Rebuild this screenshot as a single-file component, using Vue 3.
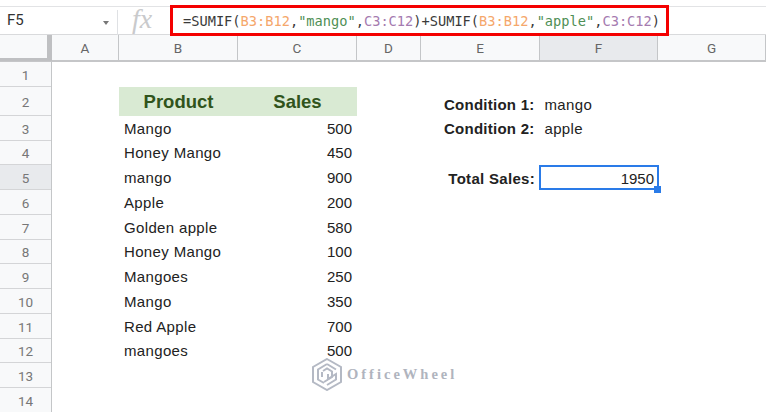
<script setup>
const columns = [
  { label: 'A', width: 67 },
  { label: 'B', width: 119 },
  { label: 'C', width: 119 },
  { label: 'D', width: 64 },
  { label: 'E', width: 119 },
  { label: 'F', width: 118, active: true },
  { label: 'G', width: 108 }
]
const rowHeights = [25, 29, 25, 24, 25, 25, 25, 24, 25, 25, 25, 24, 25, 25]
const rows = rowHeights.map((height, i) => ({ n: i + 1, height, active: i === 4 }))
const data = [
  ['Mango', 500], ['Honey Mango', 450], ['mango', 900], ['Apple', 200], ['Golden apple', 580],
  ['Honey Mango', 100], ['Mangoes', 250], ['Mango', 350], ['Red Apple', 700], ['mangoes', 500]
]
const gridColumns = columns.map(c => c.width + 'px').join(' ')
const gridRows = rowHeights.map(h => h + 'px').join(' ')
</script>

<template>
  <div class="app">
    <div class="formula-bar">
      <div class="name-box"><span>F5</span><i class="caret"></i></div>
      <div class="fx">fx</div>
      <div class="formula"><span class="k">=SUMIF(</span><span class="o">B3:B12</span><span class="k">,</span><span class="g">"mango"</span><span class="k">,</span><span class="p">C3:C12</span><span class="k">)+SUMIF(</span><span class="o">B3:B12</span><span class="k">,</span><span class="g">"apple"</span><span class="k">,</span><span class="p">C3:C12</span><span class="k">)</span></div>
    </div>
    <div class="col-head" :style="{ gridTemplateColumns: '52px ' + gridColumns }">
      <div class="corner"></div>
      <div v-for="c in columns" :key="c.label" class="col" :class="{ active: c.active }">{{ c.label }}</div>
    </div>
    <div class="body">
      <div class="row-head">
        <div v-for="r in rows" :key="r.n" class="row" :class="{ active: r.active }" :style="{ height: r.height + 'px' }">{{ r.n }}</div>
      </div>
      <div class="sheet" :style="{ gridTemplateColumns: gridColumns, gridTemplateRows: gridRows }">
        <div class="hd hd-l">Product</div>
        <div class="hd hd-r">Sales</div>
        <template v-for="(d, i) in data" :key="i">
          <div class="cell name" :style="{ gridRow: i + 3 }">{{ d[0] }}</div>
          <div class="cell num" :style="{ gridRow: i + 3 }">{{ d[1] }}</div>
        </template>
        <div class="cond c1"><b>Condition 1:</b><span>mango</span></div>
        <div class="cond c2"><b>Condition 2:</b><span>apple</span></div>
        <div class="total-label">Total Sales:</div>
        <div class="total">1950<i class="handle"></i></div>
      </div>
    </div>
    <div class="mark">
      <svg width="30" height="33" viewBox="0 0 30 33" fill="none" stroke="#b4b9c4" stroke-width="2">
        <path d="M15 1 L29 9 V24 L15 32 L1 24 V9 Z" />
        <path d="M15 6 L24 11.500 M15 6 L6 11.500 V21.500 L12 25" />
        <path d="M11 13 L15 10.500 L20 13.500 V19 L12 24 M10 19 V14" />
        <path d="M16 16 V21 L24 16 V21.500 L15 27" />
      </svg>
      <span>OfficeWheel</span>
    </div>
  </div>
</template>

<style>
html, body { margin: 0; background: #fff; overflow: hidden; }
</style>

<style scoped>
.app {
  width: 766px;
  height: 412px;
  overflow: hidden;
  position: relative;
  font-family: "Liberation Sans", Arial, sans-serif;
  color: #222;
  background: #fff;
}
.formula-bar {
  height: 35px;
  display: flex;
  box-sizing: border-box;
  padding-top: 5px;
  background: linear-gradient(#fff 6px, #e2e3e5 6px, #e2e3e5 7px, #fff 7px, #fff 34px, #d9dadc 34px);
}
.name-box {
  width: 118px;
  height: 25px;
  margin-top: 5px;
  flex: none;
  box-sizing: border-box;
  padding: 0 8px 5px 7px;
  display: flex;
  align-items: center;
  justify-content: space-between;
  font-family: Roboto, sans-serif;
  font-size: 15px;
  color: #333;
  border-right: 1px solid #dfe1e4;
}
.caret {
  border: 3.500px solid transparent;
  border-top: 4px solid #777;
  border-bottom: 0;
  margin-top: 5px;
}
.fx {
  width: 52px;
  flex: none;
  height: 30px;
  line-height: 28px;
  box-sizing: border-box;
  padding-left: 14px;
  font-family: "Liberation Serif", serif;
  font-style: italic;
  font-size: 28px;
  color: #c9cacc;
}
.formula {
  width: 499px;
  height: 31px;
  flex: none;
  box-sizing: border-box;
  border: 3px solid #f40000;
  padding-left: 10px;
  line-height: 26px;
  font-family: "DejaVu Sans Mono", monospace;
  font-size: 13.660px;
  color: #3a3a3a;
  white-space: pre;
  background: #fff;
  position: relative;
  z-index: 1;
}
.o { color: #f5a76b; }
.g { color: #4f8f55; }
.p { color: #a57bb0; }
.col-head {
  display: grid;
  height: 27px;
  background: #f8f9fa;
  border-bottom: 2px solid #c5c6c8;
  box-sizing: border-box;
  font-family: Roboto, sans-serif;
  font-size: 13.500px;
  color: #666;
}
.corner {
  background: #f8f9fa;
  border-right: 5px solid #bfc0c2;
  border-bottom: 3px solid #bfc0c2;
  margin-bottom: -1px;
  box-sizing: border-box;
}
.col {
  display: flex;
  align-items: center;
  justify-content: center;
  border-right: 1px solid #c4c6c8;
  box-sizing: border-box;
}
.col.active, .row.active { background: #e8eaed; }
.body { display: flex; }
.row-head {
  width: 52px;
  flex: none;
  box-sizing: border-box;
  background: #f8f9fa;
  border-right: 1px solid #c4c6c8;
  font-family: Roboto, sans-serif;
  font-size: 13.500px;
  color: #777;
}
.row {
  box-sizing: border-box;
  display: flex;
  align-items: center;
  justify-content: center;
  padding-top: 1px;
  border-bottom: 1px solid #d4d5d7;
}
.sheet {
  display: grid;
  font-size: 15px;
  color: #222;
}
.cell, .cond, .total-label, .total { display: flex; align-items: center; white-space: nowrap; }
.cell { padding-bottom: 1px; }
.hd {
  grid-row: 2;
  background: #d9ead3;
  color: #30541c;
  font-weight: 700;
  font-size: 18.500px;
  display: flex;
  align-items: center;
  justify-content: center;
}
.hd-l { grid-column: 2; }
.hd-r { grid-column: 3; }
.name { grid-column: 2; padding-left: 5px; letter-spacing: 0.350px; }
.num { grid-column: 3; justify-content: flex-end; padding-right: 5px; }
.cond b { margin-right: 10px; letter-spacing: 0.250px; }
.cond span { letter-spacing: 0.350px; }
.c1 { grid-column: 5 / 7; grid-row: 2; padding: 5px 0 0 23px; }
.c2 { grid-column: 5 / 7; grid-row: 3; padding-left: 23px; }
.total-label { grid-column: 5; grid-row: 5; justify-content: flex-end; padding: 1px 5px 0 0; font-weight: 700; letter-spacing: 0.300px; }
.total {
  grid-column: 6;
  grid-row: 5;
  margin: 0 -1px;
  justify-content: flex-end;
  position: relative;
  box-sizing: border-box;
  border: 2px solid #2a7be8;
  padding: 1px 3px 0 0;
}
.handle {
  position: absolute;
  right: -4px;
  bottom: -5px;
  width: 7px;
  height: 7px;
  background: #2a7be8;
}
.mark {
  position: absolute;
  left: 312px;
  top: 357px;
  display: flex;
  align-items: center;
  gap: 5px;
  height: 34px;
  padding-right: 4px;
  background: rgba(255,255,255,0.7);
}
.mark span {
  font-family: "Liberation Serif", serif;
  font-weight: 700;
  font-size: 14.500px;
  letter-spacing: 3px;
  color: #b0b4be;
}
</style>
